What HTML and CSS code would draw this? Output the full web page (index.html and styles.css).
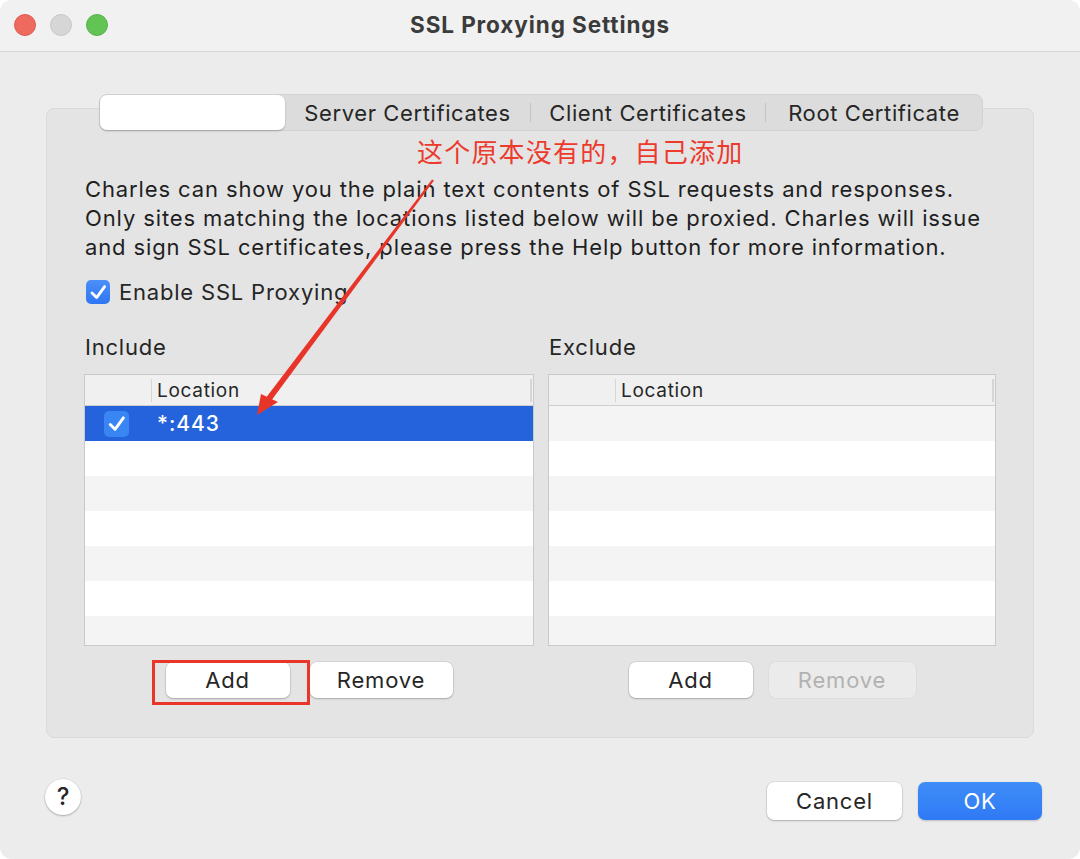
FILE: index.html
```html
<!DOCTYPE html>
<html lang="en">

<head>
    <meta charset="UTF-8">
    <title>SSL Proxying Settings</title>
    <link rel="stylesheet" href="styles.css">
</head>

<body>
    <div class="window">
        <div class="titlebar">
            <div class="lights">
                <span class="light red"></span>
                <span class="light grey"></span>
                <span class="light green"></span>
            </div>
            <div class="title">SSL Proxying Settings</div>
        </div>

        <div class="content">
            <div class="tabs">
                <div class="tab tab-1 selected"></div>
                <div class="tab tab-2">Server Certificates</div>
                <div class="tab tab-3">Client Certificates</div>
                <div class="tab tab-4">Root Certificate</div>
            </div>

            <div class="panel">
                <p class="intro">
                    Charles can show you the plain text contents of SSL requests and responses.<br>
                    Only sites matching the locations listed below will be proxied. Charles will issue<br>
                    and sign SSL certificates, please press the Help button for more information.
                </p>

                <label class="enable">
                    <span class="checkbox">
                        <svg viewBox="0 0 24 24" width="24" height="24"><path d="M6 13l4.6 4.6 8-11" /></svg>
                    </span>
                    Enable SSL Proxying
                </label>

                <div class="lists">
                    <div class="list">
                        <div class="list-title">Include</div>
                        <div class="table">
                            <div class="thead">
                                <div class="col-check"></div>
                                <div class="col-loc">Location</div>
                            </div>
                            <div class="tbody">
                                <div class="row selected">
                                    <div class="col-check">
                                        <span class="row-check">
                                            <svg viewBox="0 0 24 24" width="25" height="25"><path d="M6 13l4.6 4.6 8-11" /></svg>
                                        </span>
                                    </div>
                                    <div class="col-loc">*:443</div>
                                </div>
                                <div class="row"></div>
                                <div class="row"></div>
                                <div class="row"></div>
                                <div class="row"></div>
                                <div class="row"></div>
                                <div class="row"></div>
                            </div>
                        </div>
                        <div class="buttons">
                            <button class="btn btn-add">Add</button>
                            <button class="btn btn-remove">Remove</button>
                        </div>
                    </div>

                    <div class="list">
                        <div class="list-title">Exclude</div>
                        <div class="table">
                            <div class="thead">
                                <div class="col-check"></div>
                                <div class="col-loc">Location</div>
                            </div>
                            <div class="tbody">
                                <div class="row"></div>
                                <div class="row"></div>
                                <div class="row"></div>
                                <div class="row"></div>
                                <div class="row"></div>
                                <div class="row"></div>
                                <div class="row"></div>
                            </div>
                        </div>
                        <div class="buttons buttons-exclude">
                            <button class="btn btn-add">Add</button>
                            <button class="btn btn-remove disabled">Remove</button>
                        </div>
                    </div>
                </div>
            </div>

            <div class="footer">
                <button class="help">?</button>
                <div class="footer-buttons">
                    <button class="btn btn-cancel">Cancel</button>
                    <button class="btn btn-ok">OK</button>
                </div>
            </div>
        </div>

        <!-- annotations drawn over the screenshot -->
        <div class="note">这个原本没有的，自己添加</div>
        <div class="note-box"></div>
        <svg class="arrow" viewBox="0 0 1080 859" width="1080" height="859">
            <polygon points="434,180.6 432,179.4 265.6,398.2 270.4,401.8" />
            <polygon points="257,415 261,394 278,402" />
        </svg>
    </div>
</body>

</html>
```

FILE: styles.css
```css
* {
    box-sizing: border-box;
}

body {
    margin: 0;
    background: #ffffff;
    font-family: Inter, "Liberation Sans", sans-serif;
    color: #262626;
}

.window {
    position: relative;
    width: 1080px;
    height: 859px;
    background: #ececec;
    border-radius: 12px;
    overflow: hidden;
}

.titlebar {
    height: 52px;
    background: #f1f1f1;
    border-bottom: 1px solid #d4d4d4;
    display: flex;
    align-items: center;
    justify-content: center;
    position: relative;
}

.lights {
    position: absolute;
    left: 14px;
    top: 14px;
    display: flex;
    gap: 14px;
}

.light {
    width: 22px;
    height: 22px;
    border-radius: 50%;
}

.red {
    background: #ee6a5f;
    border: 1px solid #e0584e;
}

.grey {
    background: #d6d6d6;
    border: 1px solid #c8c8c8;
}

.green {
    background: #61c454;
    border: 1px solid #55b448;
}

.title {
    font-size: 22.5px;
    font-weight: 700;
    letter-spacing: 0.9px;
    color: #3b3b3b;
    margin-top: -3px;
}

.content {
    padding: 42px 46px 0 46px;
}

.tabs {
    position: relative;
    z-index: 1;
    display: flex;
    width: 884px;
    height: 37px;
    margin-left: 53px;
    background: #dcdcdc;
    border: 1px solid #d2d2d2;
    border-radius: 8px;
    font-size: 22px;
    letter-spacing: 0.6px;
    color: #262626;
}

.tab {
    display: flex;
    align-items: center;
    justify-content: center;
    position: relative;
    white-space: nowrap;
}

.tab-1 {
    width: 185px;
}

.tab-2 {
    width: 245px;
}

.tab-3 {
    width: 235px;
    border-left: 1px solid #c4c4c4;
    border-image: linear-gradient(transparent 25%, #c4c4c4 25%, #c4c4c4 75%, transparent 75%) 1;
}

.tab-4 {
    flex: 1;
    border-left: 1px solid #c4c4c4;
    border-image: linear-gradient(transparent 25%, #c4c4c4 25%, #c4c4c4 75%, transparent 75%) 1;
}

.tab.selected {
    background: #ffffff;
    border-radius: 7px;
    box-shadow: 0 1px 2px rgba(0, 0, 0, 0.25);
}

.panel {
    margin-top: -23px;
    height: 630px;
    background: #e4e4e4;
    border: 1px solid #dadada;
    border-radius: 8px;
    padding: 66px 37px 0 37px;
}

.intro {
    margin: 0;
    padding-left: 1px;
    font-size: 22px;
    letter-spacing: 0.88px;
    line-height: 29px;
    white-space: nowrap;
    color: #1f1f1f;
}

.enable {
    display: flex;
    align-items: center;
    gap: 9px;
    margin-top: 18px;
    margin-left: 2px;
    font-size: 22px;
    letter-spacing: 0.8px;
    line-height: 24px;
    color: #262626;
}

.checkbox {
    width: 24px;
    height: 24px;
    border-radius: 5px;
    background: linear-gradient(#4b8ff8, #2f76f3);
    display: flex;
}

.checkbox path,
.row-check path {
    fill: none;
    stroke: #ffffff;
    stroke-width: 2.8;
    stroke-linecap: round;
    stroke-linejoin: round;
}

.lists {
    display: flex;
    gap: 14px;
    margin-top: 29px;
}

.list {
    width: 450px;
}

.list+.list {
    width: 448px;
}

.list-title {
    font-size: 22px;
    letter-spacing: 0.8px;
    line-height: 29px;
    padding-left: 1px;
    margin-bottom: 12px;
    color: #262626;
}

.table {
    height: 272px;
    border: 1px solid #c9c9c9;
    background: #ffffff;
    overflow: hidden;
}

.thead {
    display: flex;
    height: 31px;
    background: #f0f0f0;
    border-bottom: 1px solid #cfcfcf;
    font-size: 19px;
    letter-spacing: 0.7px;
    color: #262626;
}

.thead .col-check {
    width: 66px;
}

.thead .col-loc {
    flex: 1;
    display: flex;
    align-items: center;
    padding-left: 5px;
    border-left: 1px solid #d6d6d6;
    border-right: 2px solid #d6d6d6;
    margin: 4px 0 3px 0;
    margin-right: 1px;
}

.tbody .row {
    height: 35px;
    display: flex;
    align-items: center;
}

.tbody .row:nth-child(odd) {
    background: #f4f4f4;
}

.tbody .row.selected {
    background: #2563dc;
    color: #ffffff;
}

.row .col-check {
    width: 72px;
    padding-left: 19px;
    display: flex;
}

.row-check {
    width: 25px;
    height: 26px;
    border-radius: 5px;
    background: #3985f4;
    display: flex;
    align-items: center;
    justify-content: center;
}

.row .col-loc {
    font-size: 21px;
    letter-spacing: 1px;
    font-weight: 500;
}

.buttons {
    display: flex;
    justify-content: center;
    gap: 20px;
    margin-top: 16px;
}

.buttons-exclude {
    gap: 16px;
}

.btn {
    height: 36px;
    border: none;
    border-radius: 7px;
    background: #ffffff;
    box-shadow: 0 0 0 0.5px rgba(0, 0, 0, 0.12), 0 1px 2px rgba(0, 0, 0, 0.22);
    font-family: Inter, "Liberation Sans", sans-serif;
    font-size: 22px;
    letter-spacing: 0.8px;
    color: #262626;
    padding: 0;
}

.btn-add {
    width: 124px;
}

.btn-remove {
    width: 143px;
}

.buttons-exclude .btn-remove {
    width: 147px;
}

.btn.disabled {
    background: #ebebeb;
    color: #b2b2b2;
    box-shadow: 0 0 0 0.5px rgba(0, 0, 0, 0.06);
}

.footer {
    display: flex;
    align-items: center;
    justify-content: space-between;
    margin-top: 38px;
    margin-right: -8px;
    margin-left: -1px;
}

.help {
    width: 36px;
    height: 36px;
    border-radius: 50%;
    border: none;
    background: #ffffff;
    box-shadow: 0 0 0 0.5px rgba(0, 0, 0, 0.1), 0 1px 2px rgba(0, 0, 0, 0.25);
    font-family: Inter, "Liberation Sans", sans-serif;
    font-size: 24px;
    font-weight: 500;
    color: #262626;
    padding: 0;
    margin-top: -3px;
}

.footer-buttons {
    display: flex;
    gap: 16px;
    margin-top: 6px;
}

.btn-cancel {
    width: 135px;
    height: 38px;
}

.btn-ok {
    width: 124px;
    height: 38px;
    background: linear-gradient(#3f8df8, #2f7af5);
    color: #ffffff;
    box-shadow: 0 1px 2px rgba(0, 0, 0, 0.2);
}

.note {
    position: absolute;
    left: 417px;
    top: 135px;
    font-family: "Noto Sans CJK SC", sans-serif;
    font-size: 26px;
    line-height: 32px;
    letter-spacing: 1.2px;
    color: #ec3a2c;
}

.note-box {
    position: absolute;
    left: 152px;
    top: 660px;
    width: 158px;
    height: 45px;
    border: 3px solid #e8362a;
}

.arrow {
    position: absolute;
    left: 0;
    top: 0;
    pointer-events: none;
}

.arrow polygon {
    fill: #e8352a;
}
```
